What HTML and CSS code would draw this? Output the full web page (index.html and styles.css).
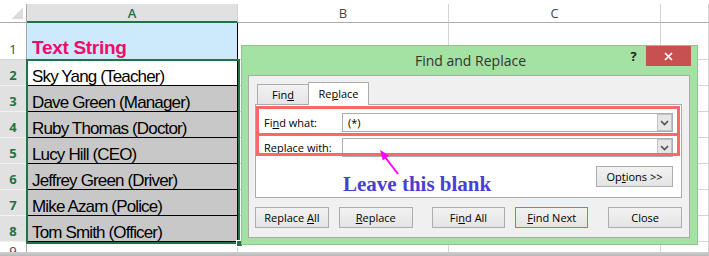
FILE: index.html
```html
<!DOCTYPE html>
<html>
<head>
<meta charset="utf-8">
<link rel="stylesheet" href="styles.css">
</head>
<body>
<div class="screen">
  <div class="sheet">
    <div class="corner"><span class="tri"></span></div>
    <div class="colhead sel">A</div>
    <div class="colhead">B</div>
    <div class="colhead">C</div>
    <div class="colhead"></div>

    <div class="rowhead">1</div>
    <div class="cell a a1">Text String</div>
    <div class="cell"></div><div class="cell"></div><div class="cell"></div>

    <div class="rowhead selrow">2</div>
    <div class="cell a white">Sky Yang (Teacher)</div>
    <div class="cell"></div><div class="cell"></div><div class="cell"></div>

    <div class="rowhead selrow">3</div>
    <div class="cell a grey">Dave Green (Manager)</div>
    <div class="cell"></div><div class="cell"></div><div class="cell"></div>

    <div class="rowhead selrow">4</div>
    <div class="cell a grey">Ruby Thomas (Doctor)</div>
    <div class="cell"></div><div class="cell"></div><div class="cell"></div>

    <div class="rowhead selrow">5</div>
    <div class="cell a grey">Lucy Hill (CEO)</div>
    <div class="cell"></div><div class="cell"></div><div class="cell"></div>

    <div class="rowhead selrow">6</div>
    <div class="cell a grey">Jeffrey Green (Driver)</div>
    <div class="cell"></div><div class="cell"></div><div class="cell"></div>

    <div class="rowhead selrow">7</div>
    <div class="cell a grey">Mike Azam (Police)</div>
    <div class="cell"></div><div class="cell"></div><div class="cell"></div>

    <div class="rowhead selrow">8</div>
    <div class="cell a grey">Tom Smith (Officer)</div>
    <div class="cell"></div><div class="cell"></div><div class="cell"></div>

    <div class="rowhead r9">9</div>
    <div class="cell last"></div><div class="cell last"></div><div class="cell last"></div><div class="cell last"></div>
  </div>
  <div class="hbar"></div>

  <div class="selection"><span class="handle"></span></div>

  <div class="dialog">
    <div class="titlebar">
      <span class="title">Find and Replace</span>
      <span class="help">?</span>
      <span class="close">
        <svg width="9" height="9" viewBox="0 0 9 9"><path d="M1 1 L8 8 M8 1 L1 8" stroke="#fff" stroke-width="1.7" fill="none"/></svg>
      </span>
    </div>
    <div class="panel">
      <div class="tabs">
        <div class="tab">Fin<u>d</u></div>
        <div class="tab active">Re<u>p</u>lace</div>
      </div>
      <div class="content">
        <div class="field">
          <span class="label">Fi<u>n</u>d what:</span>
          <div class="combo">
            <span class="val">(*)</span>
            <span class="drop"><svg width="9" height="6" viewBox="0 0 9 6"><polyline points="1,1 4.5,4.5 8,1" stroke="#505050" stroke-width="1.6" fill="none"/></svg></span>
          </div>
        </div>
        <div class="field">
          <span class="label">Re<u>p</u>lace with:</span>
          <div class="combo">
            <span class="val"></span>
            <span class="drop"><svg width="9" height="6" viewBox="0 0 9 6"><polyline points="1,1 4.5,4.5 8,1" stroke="#505050" stroke-width="1.6" fill="none"/></svg></span>
          </div>
        </div>
        <div class="lower">
          <span class="note">Leave this blank</span>
          <button class="btn options">Op<u>t</u>ions &gt;&gt;</button>
        </div>
        <div class="redbox box1"></div>
        <div class="redbox box2"></div>
        <svg class="arrow" width="35" height="35" viewBox="0 0 35 35">
          <line x1="27" y1="29" x2="14" y2="12" stroke="#ff00ff" stroke-width="2"/>
          <polygon points="9,5 18.2,10.6 11.8,15.4" fill="#ff00ff"/>
        </svg>
      </div>
      <div class="buttons">
        <button class="btn">Replace <u>A</u>ll</button>
        <button class="btn gap-s"><u>R</u>eplace</button>
        <button class="btn gap-l">Fi<u>n</u>d All</button>
        <button class="btn gap-s next"><u>F</u>ind Next</button>
        <button class="btn gap-l">Close</button>
      </div>
    </div>
  </div>
</div>
</body>
</html>
```
FILE: styles.css
```css
html, body {
  margin: 0;
  padding: 0;
  background: #fff;
}

.screen {
  position: relative;
  width: 709px;
  height: 256px;
  overflow: hidden;
  background: #fff;
}

/* ---------- spreadsheet ---------- */
.sheet {
  display: grid;
  grid-template-columns: 27px 211px 211px 212px 48px;
  grid-template-rows: 19px 37px repeat(7, 26px) 10px;
  margin-top: 4px;
}

.sheet > div {
  box-sizing: border-box;
}

.corner {
  position: relative;
  background: #fff;
  border-right: 1px solid #ababab;
  border-bottom: 1px solid #ababab;
}

.tri {
  position: absolute;
  right: 3px;
  bottom: 3px;
  width: 11px;
  height: 11px;
  background: linear-gradient(135deg, transparent 50%, #dcdcdc 50%);
}

.colhead {
  background: #fff;
  border-right: 1px solid #d4d4d4;
  border-bottom: 1px solid #ababab;
  font-family: "Open Sans", sans-serif;
  font-size: 13px;
  color: #444;
  display: flex;
  align-items: center;
  justify-content: center;
  line-height: 18px;
}

.colhead.sel {
  background: #e1e1e1;
  color: #217346;
  font-weight: 600;
  border-bottom: 2px solid #217346;
}

.rowhead {
  background: #fff;
  border-right: 1px solid #ababab;
  border-bottom: 1px solid #d4d4d4;
  font-family: "Open Sans", sans-serif;
  font-size: 13px;
  color: #444;
  display: flex;
  align-items: flex-end;
  justify-content: center;
  line-height: 16px;
  padding-bottom: 2px;
}

.rowhead.selrow {
  background: #e1e1e1;
  border-bottom: 1px solid #f2f2f2;
  color: #217346;
  font-weight: 700;
}

.rowhead.r9 {
  align-items: flex-start;
  padding: 2px 0 0;
  line-height: 14px;
  overflow: hidden;
  border-bottom: none;
}

.cell {
  border-right: 1px solid #d4d4d4;
  border-bottom: 1px solid #d4d4d4;
}

.cell.last {
  border-bottom: none;
}

.cell.a {
  border-right: 1px solid #000;
  font-family: "Liberation Sans", Arial, sans-serif;
  font-size: 17px;
  letter-spacing: -0.85px;
  color: #000;
  display: flex;
  align-items: flex-end;
  padding-left: 5px;
  line-height: 16px;
  white-space: nowrap;
}

.cell.a1 {
  background: #cde9fc;
  border-bottom: 1px solid #217346;
  font-size: 19px;
  font-weight: bold;
  letter-spacing: -0.3px;
  color: #f20a6a;
  line-height: 20px;
  padding-bottom: 1px;
}

.cell.white {
  background: #fff;
  border-bottom: 1px solid #000;
}

.cell.grey {
  background: #c8c8c8;
  border-bottom: 1px solid #000;
}

.hbar {
  height: 4px;
  background: linear-gradient(#d0d0d0, #b8b8b8);
}

.selection {
  position: absolute;
  left: 26px;
  top: 59px;
  width: 214px;
  height: 185px;
  box-sizing: border-box;
  border: 2px solid #217346;
}

.handle {
  position: absolute;
  right: -5px;
  bottom: -5px;
  width: 5px;
  height: 5px;
  background: #217346;
  border: 1px solid #fff;
}

/* ---------- dialog ---------- */
.dialog {
  position: absolute;
  left: 241px;
  top: 45px;
  width: 457px;
  height: 200px;
  box-sizing: border-box;
  background: #a4e2a4;
  border: 1px solid #8fc58f;
  display: flex;
  flex-direction: column;
  font-family: "Open Sans", sans-serif;
}

.titlebar {
  height: 29px;
  display: flex;
  align-items: flex-start;
  padding: 0 6px 0 73px;
}

.title {
  flex: 1;
  text-align: center;
  font-size: 14px;
  line-height: 29px;
  color: #333;
}

.help {
  width: 15px;
  margin-right: 5px;
  text-align: center;
  font-weight: bold;
  font-size: 13px;
  line-height: 20px;
  color: #222;
}

.close {
  width: 45px;
  height: 20px;
  background: #c75050;
  display: flex;
  align-items: center;
  justify-content: center;
}

.panel {
  flex: 1;
  margin: 0 7px 6px 6px;
  background: #f0f0f0;
  border: 1px solid #a9a9a9;
  padding: 6px 7px 0 6px;
  display: flex;
  flex-direction: column;
}

.tabs {
  display: flex;
  align-items: flex-end;
  margin-left: 2px;
  height: 23px;
  margin-bottom: -1px;
  position: relative;
  z-index: 1;
}

.tab {
  box-sizing: border-box;
  font-size: 11px;
  color: #000;
  text-align: center;
  border: 1px solid #acacac;
  border-bottom: none;
}

.tab:first-child {
  width: 51px;
  height: 20px;
  margin-bottom: 1px;
  border-right: none;
  line-height: 19px;
  background: linear-gradient(#f2f2f2, #e5e5e5);
}

.tab.active {
  width: 61px;
  height: 23px;
  background: #fff;
  line-height: 20px;
  padding-top: 1px;
}

.content {
  position: relative;
  height: 94px;
  box-sizing: border-box;
  background: #fff;
  border: 1px solid #acacac;
  padding: 8px 8px 0 8px;
}

.field {
  display: flex;
  align-items: center;
  height: 19px;
}

.field + .field {
  margin-top: 6px;
}

.label {
  width: 78px;
  font-size: 11px;
  color: #000;
  white-space: nowrap;
}

.combo {
  flex: 1;
  height: 19px;
  box-sizing: border-box;
  border: 1px solid #abadb3;
  display: flex;
  background: #fff;
}

.val {
  flex: 1;
  padding-left: 5px;
  font-size: 11px;
  line-height: 17px;
  color: #000;
}

.drop {
  width: 15px;
  box-sizing: border-box;
  border: 1px solid #c2c2c2;
  background: #e6e6e6;
  display: flex;
  align-items: center;
  justify-content: center;
}

.lower {
  display: flex;
  align-items: flex-start;
  margin-top: 9px;
}

.note {
  margin-left: 79px;
  margin-top: 6px;
  font-family: "Liberation Serif", "Times New Roman", serif;
  font-weight: bold;
  font-size: 21px;
  line-height: 24px;
  color: #4b3fd3;
  white-space: nowrap;
}

.btn {
  box-sizing: border-box;
  width: 74px;
  height: 21px;
  padding: 0;
  margin: 0;
  border: 1px solid #adadad;
  background: linear-gradient(#f2f2f2, #e4e4e4);
  font-family: "Open Sans", sans-serif;
  font-size: 11px;
  line-height: 19px;
  color: #000;
  white-space: nowrap;
}

.btn.options {
  margin-left: auto;
  width: 77px;
}

.redbox {
  position: absolute;
  left: 0;
  width: 424px;
  box-sizing: border-box;
  border: 3px solid #ff6868;
}

.box1 {
  top: 1px;
  height: 30px;
}

.box2 {
  top: 28px;
  height: 23px;
}

.arrow {
  position: absolute;
  left: 115px;
  top: 40px;
}

.buttons {
  display: flex;
  margin-top: 9px;
}

.btn.gap-s {
  margin-left: 10px;
}

.btn.gap-l {
  margin-left: 19px;
}

.btn.next {
  width: 73px;
  border-color: #3c9ae8;
}

.btn.next + .btn.gap-l {
  margin-left: 20px;
}
```
